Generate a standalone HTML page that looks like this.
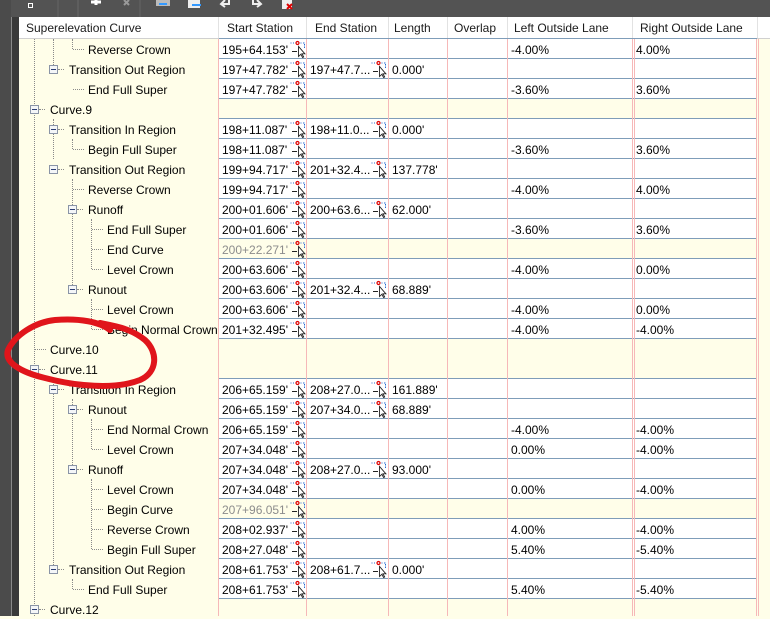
<!DOCTYPE html>
<html><head><meta charset="utf-8"><style>
*{margin:0;padding:0;box-sizing:border-box}
body{width:770px;height:616px;overflow:hidden;position:relative;background:#fffee9;font-family:"Liberation Sans",sans-serif;font-size:12px;color:#000}
.tb{position:absolute;left:0;top:0;width:770px;height:17px;background:#535353}
.ls{position:absolute;left:0;top:0;width:11px;height:616px;background:#4b4b4b}
.ls2{position:absolute;left:11px;top:17px;width:1px;height:599px;background:#8a8a8a}
.ls3{position:absolute;left:12px;top:17px;width:7px;height:599px;background:#3a3a3a}
.hd{position:absolute;left:19px;top:17px;width:751px;height:22px;background:#fff;border-bottom:1px solid #d0d0d0}
.hd span{position:absolute;top:4px;color:#1a1a1a}
.hs{position:absolute;top:17px;width:1px;height:21px;background:#e2e2e2}
.r{position:absolute;left:0;width:770px;height:20px}
.w{position:absolute;left:219px;top:0;width:538px;height:20px;background:#fff;border-bottom:1px solid #7f9db9;box-shadow:0 -1px 0 #7f9db9}
.t{position:absolute;top:4px;white-space:nowrap}
.g{color:#8c8c8c}
.pk{position:absolute;top:39px;width:1px;height:577px;background:#f6b8b8}
.vl{position:absolute;width:0;border-left:1px dotted #8a8a8a}
.hl{position:absolute;height:0;border-top:1px dotted #8a8a8a}
.bx{position:absolute;width:9px;height:9px;border:1px solid #8a94a6;background:#f4f6f8}
.bx:after{content:"";position:absolute;left:1px;top:3px;width:5px;height:1px;background:#2c3e75}
.ic{position:absolute;top:1px;width:17px;height:18px;overflow:visible}
</style></head><body>
<svg width="0" height="0" style="position:absolute"><defs>
<g id="ic"><rect x="1.5" y="2.5" width="1" height="1" fill="#2a6bd1"/><rect x="4" y="2.5" width="1" height="1" fill="#2a6bd1"/><circle cx="8.5" cy="3" r="1.5" fill="none" stroke="#d00" stroke-width="1.2"/><rect x="11.5" y="2.5" width="1" height="1" fill="#2a6bd1"/><rect x="14" y="2.5" width="1.5" height="1" fill="#2a6bd1"/><path d="M15.5 4v5" stroke="#2a6bd1" stroke-dasharray="1.5 1"/><path d="M3 11.5h5" stroke="#222"/><path d="M9.5 6.5v10l2.3-2.2 1.8 3.2 1.1-.6-1.8-3.1h3z" fill="#fff" stroke="#222" stroke-width="0.9"/></g>
</defs></svg>
<div class="tb"></div>
<svg style="position:absolute;left:20px;top:0" width="280" height="17">
<rect x="8" y="3" width="5" height="5" fill="#fff"/><rect x="9" y="4" width="3" height="3" fill="#555"/>
<path d="M38 0v17" stroke="#666"/><path d="M58 0v17" stroke="#6a6a6a"/>
<path d="M76 0v5M71 2h10" stroke="#fff" stroke-width="3"/>
<path d="M104 0l5 5M109 0l-5 5" stroke="#999" stroke-width="2"/>
<path d="M120 0v17" stroke="#666"/>
<path d="M136 0h14v6h-14z" fill="#bbb"/><path d="M139 4h8" stroke="#39f" stroke-width="2"/>
<path d="M168 0h12v8h-12z" fill="#eee"/><path d="M172 5h9" stroke="#39f" stroke-width="2"/>
<path d="M205 0l-4 4 4 3M201 4h8v-4" stroke="#eee" stroke-width="2" fill="none"/>
<path d="M237 0l4 4-4 3M241 4h-8v-4" stroke="#eee" stroke-width="2" fill="none"/>
<rect x="262" y="0" width="10" height="9" fill="#eee"/><path d="M267 4l5 5M272 4l-5 5" stroke="#d00" stroke-width="2"/>
</svg>
<div class="ls"></div><div class="ls2"></div><div class="ls3"></div>
<div class="hd">
<span style="left:7px">Superelevation Curve</span><span style="left:208px">Start Station</span><span style="left:296px">End Station</span><span style="left:375px">Length</span><span style="left:435px">Overlap</span><span style="left:495px">Left Outside Lane</span><span style="left:621px">Right Outside Lane</span>
</div>
<div class="hs" style="left:218px"></div><div class="hs" style="left:306px"></div><div class="hs" style="left:388px"></div><div class="hs" style="left:447px"></div><div class="hs" style="left:507px"></div><div class="hs" style="left:632px"></div><div class="hs" style="left:757px"></div>

<div class="r" style="top:39px"><div class="w"></div><span class="t" style="left:88px">Reverse Crown</span><span class="t" style="left:222px">195+64.153'</span><svg class="ic" style="left:289px"><use href="#ic"/></svg><span class="t" style="left:511px">-4.00%</span><span class="t" style="left:636px">4.00%</span></div>
<div class="r" style="top:59px"><div class="w"></div><span class="t" style="left:69px">Transition Out Region</span><span class="t" style="left:222px">197+47.782'</span><svg class="ic" style="left:289px"><use href="#ic"/></svg><span class="t" style="left:310px">197+47.7...</span><svg class="ic" style="left:370px"><use href="#ic"/></svg><span class="t" style="left:392px">0.000'</span></div>
<div class="r" style="top:79px"><div class="w"></div><span class="t" style="left:88px">End Full Super</span><span class="t" style="left:222px">197+47.782'</span><svg class="ic" style="left:289px"><use href="#ic"/></svg><span class="t" style="left:511px">-3.60%</span><span class="t" style="left:636px">3.60%</span></div>
<div class="r" style="top:99px"><span class="t" style="left:50px">Curve.9</span></div>
<div class="r" style="top:119px"><div class="w"></div><span class="t" style="left:69px">Transition In Region</span><span class="t" style="left:222px">198+11.087'</span><svg class="ic" style="left:289px"><use href="#ic"/></svg><span class="t" style="left:310px">198+11.0...</span><svg class="ic" style="left:370px"><use href="#ic"/></svg><span class="t" style="left:392px">0.000'</span></div>
<div class="r" style="top:139px"><div class="w"></div><span class="t" style="left:88px">Begin Full Super</span><span class="t" style="left:222px">198+11.087'</span><svg class="ic" style="left:289px"><use href="#ic"/></svg><span class="t" style="left:511px">-3.60%</span><span class="t" style="left:636px">3.60%</span></div>
<div class="r" style="top:159px"><div class="w"></div><span class="t" style="left:69px">Transition Out Region</span><span class="t" style="left:222px">199+94.717'</span><svg class="ic" style="left:289px"><use href="#ic"/></svg><span class="t" style="left:310px">201+32.4...</span><svg class="ic" style="left:370px"><use href="#ic"/></svg><span class="t" style="left:392px">137.778'</span></div>
<div class="r" style="top:179px"><div class="w"></div><span class="t" style="left:88px">Reverse Crown</span><span class="t" style="left:222px">199+94.717'</span><svg class="ic" style="left:289px"><use href="#ic"/></svg><span class="t" style="left:511px">-4.00%</span><span class="t" style="left:636px">4.00%</span></div>
<div class="r" style="top:199px"><div class="w"></div><span class="t" style="left:88px">Runoff</span><span class="t" style="left:222px">200+01.606'</span><svg class="ic" style="left:289px"><use href="#ic"/></svg><span class="t" style="left:310px">200+63.6...</span><svg class="ic" style="left:370px"><use href="#ic"/></svg><span class="t" style="left:392px">62.000'</span></div>
<div class="r" style="top:219px"><div class="w"></div><span class="t" style="left:107px">End Full Super</span><span class="t" style="left:222px">200+01.606'</span><svg class="ic" style="left:289px"><use href="#ic"/></svg><span class="t" style="left:511px">-3.60%</span><span class="t" style="left:636px">3.60%</span></div>
<div class="r" style="top:239px"><span class="t" style="left:107px">End Curve</span><span class="t g" style="left:222px">200+22.271'</span><svg class="ic" style="left:289px"><use href="#ic"/></svg></div>
<div class="r" style="top:259px"><div class="w"></div><span class="t" style="left:107px">Level Crown</span><span class="t" style="left:222px">200+63.606'</span><svg class="ic" style="left:289px"><use href="#ic"/></svg><span class="t" style="left:511px">-4.00%</span><span class="t" style="left:636px">0.00%</span></div>
<div class="r" style="top:279px"><div class="w"></div><span class="t" style="left:88px">Runout</span><span class="t" style="left:222px">200+63.606'</span><svg class="ic" style="left:289px"><use href="#ic"/></svg><span class="t" style="left:310px">201+32.4...</span><svg class="ic" style="left:370px"><use href="#ic"/></svg><span class="t" style="left:392px">68.889'</span></div>
<div class="r" style="top:299px"><div class="w"></div><span class="t" style="left:107px">Level Crown</span><span class="t" style="left:222px">200+63.606'</span><svg class="ic" style="left:289px"><use href="#ic"/></svg><span class="t" style="left:511px">-4.00%</span><span class="t" style="left:636px">0.00%</span></div>
<div class="r" style="top:319px"><div class="w"></div><span class="t" style="left:107px">Begin Normal Crown</span><span class="t" style="left:222px">201+32.495'</span><svg class="ic" style="left:289px"><use href="#ic"/></svg><span class="t" style="left:511px">-4.00%</span><span class="t" style="left:636px">-4.00%</span></div>
<div class="r" style="top:339px"><span class="t" style="left:50px">Curve.10</span></div>
<div class="r" style="top:359px"><span class="t" style="left:50px">Curve.11</span></div>
<div class="r" style="top:379px"><div class="w"></div><span class="t" style="left:69px">Transition In Region</span><span class="t" style="left:222px">206+65.159'</span><svg class="ic" style="left:289px"><use href="#ic"/></svg><span class="t" style="left:310px">208+27.0...</span><svg class="ic" style="left:370px"><use href="#ic"/></svg><span class="t" style="left:392px">161.889'</span></div>
<div class="r" style="top:399px"><div class="w"></div><span class="t" style="left:88px">Runout</span><span class="t" style="left:222px">206+65.159'</span><svg class="ic" style="left:289px"><use href="#ic"/></svg><span class="t" style="left:310px">207+34.0...</span><svg class="ic" style="left:370px"><use href="#ic"/></svg><span class="t" style="left:392px">68.889'</span></div>
<div class="r" style="top:419px"><div class="w"></div><span class="t" style="left:107px">End Normal Crown</span><span class="t" style="left:222px">206+65.159'</span><svg class="ic" style="left:289px"><use href="#ic"/></svg><span class="t" style="left:511px">-4.00%</span><span class="t" style="left:636px">-4.00%</span></div>
<div class="r" style="top:439px"><div class="w"></div><span class="t" style="left:107px">Level Crown</span><span class="t" style="left:222px">207+34.048'</span><svg class="ic" style="left:289px"><use href="#ic"/></svg><span class="t" style="left:511px">0.00%</span><span class="t" style="left:636px">-4.00%</span></div>
<div class="r" style="top:459px"><div class="w"></div><span class="t" style="left:88px">Runoff</span><span class="t" style="left:222px">207+34.048'</span><svg class="ic" style="left:289px"><use href="#ic"/></svg><span class="t" style="left:310px">208+27.0...</span><svg class="ic" style="left:370px"><use href="#ic"/></svg><span class="t" style="left:392px">93.000'</span></div>
<div class="r" style="top:479px"><div class="w"></div><span class="t" style="left:107px">Level Crown</span><span class="t" style="left:222px">207+34.048'</span><svg class="ic" style="left:289px"><use href="#ic"/></svg><span class="t" style="left:511px">0.00%</span><span class="t" style="left:636px">-4.00%</span></div>
<div class="r" style="top:499px"><span class="t" style="left:107px">Begin Curve</span><span class="t g" style="left:222px">207+96.051'</span><svg class="ic" style="left:289px"><use href="#ic"/></svg></div>
<div class="r" style="top:519px"><div class="w"></div><span class="t" style="left:107px">Reverse Crown</span><span class="t" style="left:222px">208+02.937'</span><svg class="ic" style="left:289px"><use href="#ic"/></svg><span class="t" style="left:511px">4.00%</span><span class="t" style="left:636px">-4.00%</span></div>
<div class="r" style="top:539px"><div class="w"></div><span class="t" style="left:107px">Begin Full Super</span><span class="t" style="left:222px">208+27.048'</span><svg class="ic" style="left:289px"><use href="#ic"/></svg><span class="t" style="left:511px">5.40%</span><span class="t" style="left:636px">-5.40%</span></div>
<div class="r" style="top:559px"><div class="w"></div><span class="t" style="left:69px">Transition Out Region</span><span class="t" style="left:222px">208+61.753'</span><svg class="ic" style="left:289px"><use href="#ic"/></svg><span class="t" style="left:310px">208+61.7...</span><svg class="ic" style="left:370px"><use href="#ic"/></svg><span class="t" style="left:392px">0.000'</span></div>
<div class="r" style="top:579px"><div class="w"></div><span class="t" style="left:88px">End Full Super</span><span class="t" style="left:222px">208+61.753'</span><svg class="ic" style="left:289px"><use href="#ic"/></svg><span class="t" style="left:511px">5.40%</span><span class="t" style="left:636px">-5.40%</span></div>
<div class="r" style="top:599px"><span class="t" style="left:50px">Curve.12</span></div>

<div class="pk" style="left:218px"></div><div class="pk" style="left:306px"></div><div class="pk" style="left:388px"></div><div class="pk" style="left:447px"></div><div class="pk" style="left:507px"></div><div class="pk" style="left:632px"></div><div class="pk" style="left:634px"></div><div class="pk" style="left:756px"></div><div class="pk" style="left:758px"></div>

<div class="vl" style="left:34px;top:39px;height:577px"></div>
<div class="vl" style="left:53px;top:39px;height:30px"></div>
<div class="vl" style="left:53px;top:119px;height:40px"></div>
<div class="vl" style="left:53px;top:379px;height:190px"></div>
<div class="vl" style="left:72px;top:39px;height:10px"></div>
<div class="vl" style="left:72px;top:139px;height:10px"></div>
<div class="vl" style="left:72px;top:179px;height:110px"></div>
<div class="vl" style="left:72px;top:399px;height:70px"></div>
<div class="vl" style="left:72px;top:579px;height:10px"></div>
<div class="vl" style="left:91px;top:219px;height:50px"></div>
<div class="vl" style="left:91px;top:299px;height:30px"></div>
<div class="vl" style="left:91px;top:419px;height:30px"></div>
<div class="vl" style="left:91px;top:479px;height:70px"></div>

<div class="hl" style="left:73px;top:49px;width:11px"></div>
<div class="hl" style="left:73px;top:89px;width:11px"></div>
<div class="hl" style="left:73px;top:149px;width:11px"></div>
<div class="hl" style="left:73px;top:189px;width:11px"></div>
<div class="hl" style="left:92px;top:229px;width:11px"></div>
<div class="hl" style="left:92px;top:249px;width:11px"></div>
<div class="hl" style="left:92px;top:269px;width:11px"></div>
<div class="hl" style="left:92px;top:309px;width:11px"></div>
<div class="hl" style="left:92px;top:329px;width:11px"></div>
<div class="hl" style="left:35px;top:349px;width:11px"></div>
<div class="hl" style="left:92px;top:429px;width:11px"></div>
<div class="hl" style="left:92px;top:449px;width:11px"></div>
<div class="hl" style="left:92px;top:489px;width:11px"></div>
<div class="hl" style="left:92px;top:509px;width:11px"></div>
<div class="hl" style="left:92px;top:529px;width:11px"></div>
<div class="hl" style="left:92px;top:549px;width:11px"></div>
<div class="hl" style="left:73px;top:589px;width:11px"></div>

<div class="hl" style="left:39px;top:109px;width:6px"></div><div class="bx" style="left:30px;top:105px"></div>
<div class="hl" style="left:39px;top:369px;width:6px"></div><div class="bx" style="left:30px;top:365px"></div>
<div class="hl" style="left:39px;top:609px;width:6px"></div><div class="bx" style="left:30px;top:605px"></div>
<div class="hl" style="left:58px;top:69px;width:6px"></div><div class="bx" style="left:49px;top:65px"></div>
<div class="hl" style="left:58px;top:129px;width:6px"></div><div class="bx" style="left:49px;top:125px"></div>
<div class="hl" style="left:58px;top:169px;width:6px"></div><div class="bx" style="left:49px;top:165px"></div>
<div class="hl" style="left:58px;top:389px;width:6px"></div><div class="bx" style="left:49px;top:385px"></div>
<div class="hl" style="left:58px;top:569px;width:6px"></div><div class="bx" style="left:49px;top:565px"></div>
<div class="hl" style="left:77px;top:209px;width:6px"></div><div class="bx" style="left:68px;top:205px"></div>
<div class="hl" style="left:77px;top:289px;width:6px"></div><div class="bx" style="left:68px;top:285px"></div>
<div class="hl" style="left:77px;top:409px;width:6px"></div><div class="bx" style="left:68px;top:405px"></div>
<div class="hl" style="left:77px;top:469px;width:6px"></div><div class="bx" style="left:68px;top:465px"></div>

<svg style="position:absolute;left:0;top:0" width="770" height="616">
<path d="M110 330 C100 322 80 318 55 320 C35 322 15 335 8 350 C4 362 20 372 45 378 C75 386 115 390 140 380 C158 372 158 352 145 340 C130 328 115 326 100 323" fill="none" stroke="#e0151b" stroke-width="6" stroke-linecap="round"/>
</svg>
</body></html>
